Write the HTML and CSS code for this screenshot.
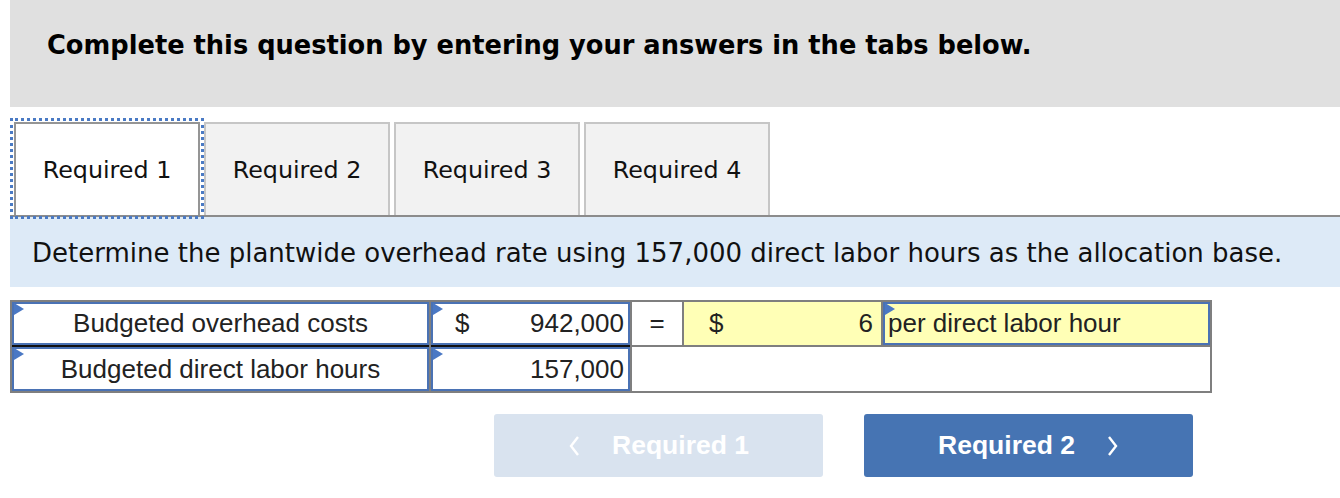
FILE: index.html
```html
<!DOCTYPE html>
<html>
<head>
<meta charset="utf-8">
<link rel="stylesheet" href="styles.css">
</head>
<body>
<div class="page">
  <div class="header">Complete this question by entering your answers in the tabs below.</div>
  <div class="tabs">
    <div class="tab active">Required 1</div>
    <div class="tab">Required 2</div>
    <div class="tab">Required 3</div>
    <div class="tab">Required 4</div>
  </div>
  <div class="prompt">Determine the plantwide overhead rate using 157,000 direct labor hours as the allocation base.</div>
  <div class="grid">
    <div class="cell input label">Budgeted overhead costs</div>
    <div class="cell input amount"><span>$</span><span>942,000</span></div>
    <div class="cell eq">=</div>
    <div class="cell yellow result"><span>$</span><span>6</span></div>
    <div class="cell input yellow unit">per direct labor hour</div>
    <div class="cell input label row2">Budgeted direct labor hours</div>
    <div class="cell input amount row2"><span></span><span>157,000</span></div>
    <div class="cell empty"></div>
  </div>
  <div class="nav">
    <div class="btn disabled">
      <svg class="chev" width="12" height="22" viewBox="0 0 12 22"><path d="M10 2 L3 11 L10 20" fill="none" stroke="#fff" stroke-width="2.4"/></svg>
      <span>Required 1</span>
    </div>
    <div class="btn primary">
      <span>Required 2</span>
      <svg class="chev" width="12" height="22" viewBox="0 0 12 22"><path d="M2 2 L9 11 L2 20" fill="none" stroke="#fff" stroke-width="2.4"/></svg>
    </div>
  </div>
</div>
</body>
</html>
```
FILE: styles.css
```css
html, body {
  margin: 0;
  padding: 0;
  background: #fff;
}
.page {
  padding-left: 10px;
  font-family: "DejaVu Sans", Verdana, sans-serif;
  color: #000;
}
.header {
  height: 107px;
  box-sizing: border-box;
  background: #e0e0e0;
  padding: 30px 0 0 37px;
  font-weight: bold;
  font-size: 25.7px;
  line-height: 30px;
}
.tabs {
  margin-top: 15px;
  display: flex;
  gap: 4px;
  padding-left: 4px;
  border-bottom: 2px solid #8c8c8c;
}
.tab {
  width: 186px;
  height: 93px;
  box-sizing: border-box;
  border: 2px solid #c6c6c6;
  border-bottom: 0;
  background: #f2f2f2;
  display: flex;
  align-items: center;
  justify-content: center;
  font-size: 23.8px;
  color: #111;
}
.tab.active {
  background: #fff;
  border-color: #959595;
  outline: 3px dotted #4a7ac4;
  outline-offset: 1px;
}
.prompt {
  height: 70px;
  box-sizing: border-box;
  background: #ddeaf7;
  padding: 2px 0 0 22px;
  display: flex;
  align-items: center;
  font-size: 26px;
  color: #111;
}
.grid {
  margin-top: 13px;
  width: 1202px;
  box-sizing: border-box;
  display: grid;
  grid-template-columns: 417px 199px 50px 197px 327px;
  grid-template-rows: 43px 44px;
  column-gap: 2px;
  row-gap: 2px;
  padding: 2px;
  background: #7f7f7f;
  font-family: "Liberation Sans", Arial, sans-serif;
  font-size: 26px;
  color: #222;
}
.cell {
  position: relative;
  box-sizing: border-box;
  background: #fff;
  display: flex;
  align-items: center;
}
.input {
  border: 2px solid #4a72b4;
}
.input::before {
  content: "";
  position: absolute;
  top: -1px;
  left: 0;
  border-left: 10px solid #4a78c4;
  border-top: 6px solid transparent;
  border-bottom: 6px solid transparent;
}
.yellow {
  background: #ffffb6;
}
.label {
  justify-content: center;
}
.amount {
  justify-content: space-between;
  padding: 0 4px 0 22px;
}
.row2 {
  box-shadow: 0 -2px 0 #111;
}
.eq {
  justify-content: center;
}
.result {
  justify-content: space-between;
  padding: 0 8px 0 25px;
}
.unit {
  padding-left: 3px;
}
.empty {
  grid-column: 3 / 6;
}
.nav {
  margin-top: 21px;
  padding-left: 484px;
  display: flex;
  gap: 41px;
}
.btn {
  width: 329px;
  height: 63px;
  border-radius: 3px;
  display: flex;
  align-items: center;
  justify-content: center;
  gap: 32px;
  color: #fff;
  font-family: "Liberation Sans", Arial, sans-serif;
  font-weight: bold;
  font-size: 26.5px;
}
.btn.disabled {
  background: #d9e3ef;
}
.btn.primary {
  background: #4674b3;
}
.chev {
  display: block;
}
```
